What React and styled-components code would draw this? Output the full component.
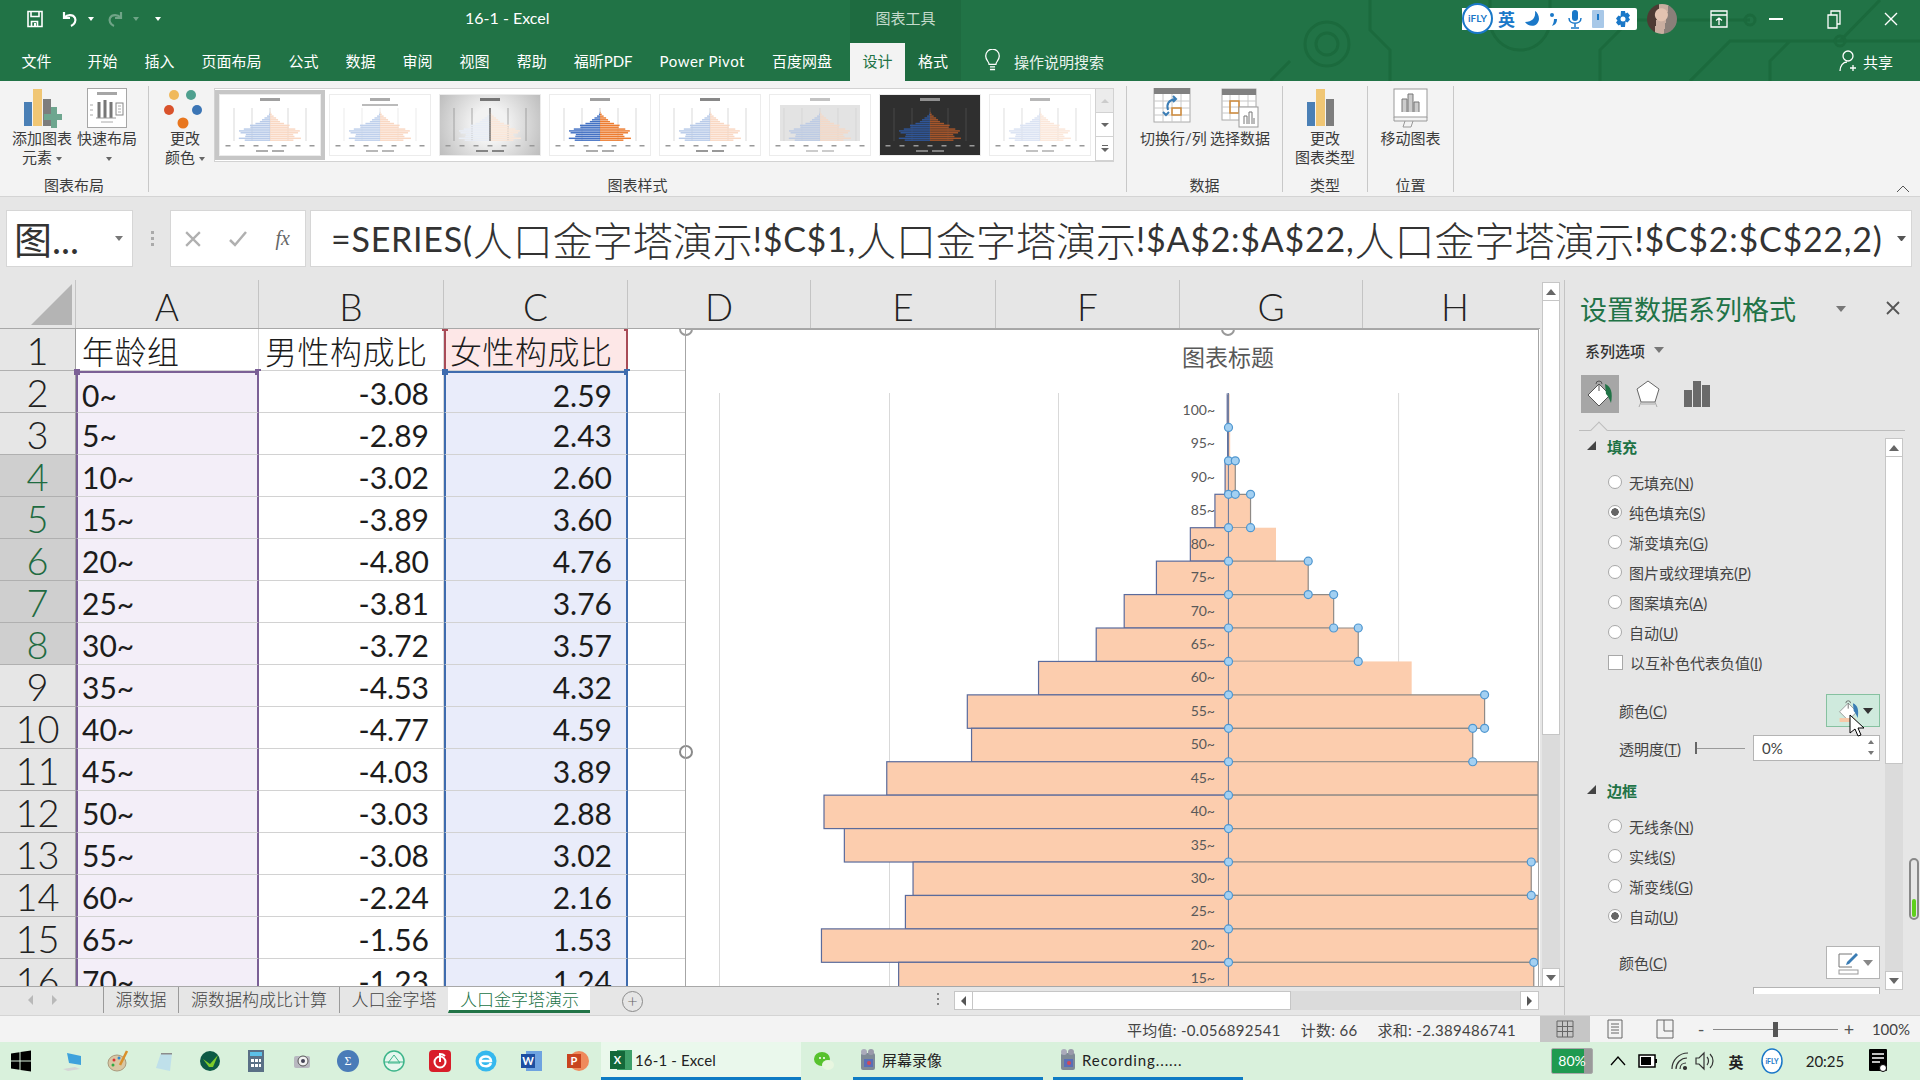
import React from 'react';
import styled, { createGlobalStyle } from 'styled-components';

const FONT = `Lato, "Noto Sans CJK SC", sans-serif`;
const GREEN = '#217346';

const GlobalStyle = createGlobalStyle`
  html, body { margin: 0; padding: 0; background: #e6e6e6; }
  body { font-family: ${FONT}; }
  * { box-sizing: border-box; }
`;

/* ---------- data ---------- */

const sheetRows = [
  ['0~', -3.08, 2.59], ['5~', -2.89, 2.43], ['10~', -3.02, 2.6], ['15~', -3.89, 3.6], ['20~', -4.8, 4.76],
  ['25~', -3.81, 3.76], ['30~', -3.72, 3.57], ['35~', -4.53, 4.32], ['40~', -4.77, 4.59], ['45~', -4.03, 3.89],
  ['50~', -3.03, 2.88], ['55~', -3.08, 3.02], ['60~', -2.24, 2.16], ['65~', -1.56, 1.53], ['70~', -1.23, 1.24],
];

const pyramid = [
  ['100~', 0.015, 0.012, false], ['95~', 0.01, 0.02, false], ['90~', 0.04, 0.08, true], ['85~', 0.16, 0.26, true],
  ['80~', 0.45, 0.56, false], ['75~', 0.85, 0.94, true], ['70~', 1.23, 1.24, true], ['65~', 1.56, 1.53, true],
  ['60~', 2.24, 2.16, false], ['55~', 3.08, 3.02, true], ['50~', 3.03, 2.88, true], ['45~', 4.03, 3.89, true],
  ['40~', 4.77, 4.59, true], ['35~', 4.53, 4.32, true], ['30~', 3.72, 3.57, true], ['25~', 3.81, 3.76, true],
  ['20~', 4.8, 4.76, true], ['15~', 3.89, 3.6, true], ['10~', 3.02, 2.6, true],
];

const columns = [
  ['A', 183], ['B', 185], ['C', 184], ['D', 183], ['E', 185], ['F', 184], ['G', 183], ['H', 185],
];

const tabs = ['开始', '插入', '页面布局', '公式', '数据', '审阅', '视图', '帮助', '福昕PDF', 'Power Pivot', '百度网盘'];

const thumbs = [
  { bg: '#fff', left: '#b9cbe9', right: '#f9d8c3', grid: '#c8c8c8', title: '#777' },
  { bg: '#fff', left: '#bfd0ec', right: '#f9d8c3', grid: '#e2e2e2', title: '#888', low: true },
  { bg: 'radial-gradient(circle, #f2f2f2 30%, #bdbdbd 100%)', left: '#e8edf5', right: '#fae6d8', grid: '#8a8a8a', title: '#444', axis: '#444' },
  { bg: '#fff', left: '#4472c4', right: '#ed7d31', grid: '#c8c8c8', title: '#777' },
  { bg: '#fff', left: '#b9cbe9', right: '#f9d8c3', grid: '#c8c8c8', title: '#555' },
  { bg: '#fff', inner: '#e3e3e3', left: '#bdcbe4', right: '#f3d9c8', grid: '#d0d0d0', title: '#aaa' },
  { bg: '#2f2f2f', left: '#2f5597', right: '#a5552a', grid: '#555', title: '#bbb' },
  { bg: '#fff', left: '#dbe3f3', right: '#fbe7da', grid: '#d0d0d0', title: '#999' },
];

/* ---------- window top ---------- */

const Page = styled.div`
  width: 1920px;
  height: 1080px;
  overflow: hidden;
  display: flex;
  flex-direction: column;
  font-family: ${FONT};
  color: #333;
`;

const TopBar = styled.header`
  position: relative;
  height: 81px;
  flex: none;
  background: ${GREEN};
  color: #fff;
`;

const Circuit = styled.svg`
  position: absolute;
  left: 1270px;
  top: 0;
  pointer-events: none;
`;

const TitleRow = styled.div`
  position: relative;
  display: flex;
  height: 43px;
  font-size: 15px;
`;

const Qat = styled.div`
  width: 465px;
  display: flex;
  align-items: center;
  height: 38px;
  padding-left: 26px;
`;

const QatButton = styled.span`
  display: flex;
  align-items: center;
  margin-right: ${p => p.$gap || 0}px;
  opacity: ${p => (p.$off ? 0.35 : 1)};
`;

const DocTitle = styled.div`
  width: 385px;
  line-height: 36px;
  font-size: 16px;
`;

const ToolBand = styled.div`
  width: 111px;
  background: #1e6b40;
  color: #c4dacc;
  text-align: center;
  line-height: 36px;
`;

const TitleRight = styled.div`
  margin-left: auto;
  display: flex;
  align-items: center;
  height: 38px;
  width: 458px;
`;

const Ifly = styled.div`
  position: relative;
  width: 175px;
  height: 22px;
  margin-top: -1px;
  background: #fff;
  border-radius: 0 2px 2px 0;
  display: flex;
  align-items: center;
  padding-left: 36px;
  gap: 9px;
  color: #1a78c8;
  font-size: 17px;
  font-weight: 700;
`;

const IflyBall = styled.span`
  position: absolute;
  left: 0;
  top: -5px;
  width: 31px;
  height: 31px;
  border-radius: 50%;
  background: #fff;
  border: 2px solid #1a78c8;
  font-size: 10px;
  line-height: 27px;
  text-align: center;
  font-weight: 700;
`;

const Avatar = styled.span`
  width: 30px;
  height: 30px;
  margin-left: 10px;
  margin-right: 13px;
  border-radius: 50%;
  background:
    radial-gradient(circle at 48% 36%, #e3c3b0 0 6px, transparent 7px),
    linear-gradient(100deg, #4d3a33 0 35%, #c9aea0 35% 62%, #8a7f79 62%);
`;

const WinButton = styled.span`
  width: 57.5px;
  display: flex;
  justify-content: center;
`;

const TabRow = styled.nav`
  position: relative;
  display: flex;
  height: 38px;
  font-size: 15px;
`;

const TabGroup = styled.div`
  width: 850px;
  display: flex;
  padding-left: 8px;
`;

const Tab = styled.div`
  padding: 0 13.5px;
  margin-right: ${p => p.$gap || 0}px;
  line-height: 36px;
  white-space: nowrap;
  letter-spacing: ${p => (p.$latin ? 0.55 : 0)}px;
`;

const ContextTab = styled.div`
  width: ${p => p.$w}px;
  text-align: center;
  line-height: 36px;
  background: ${p => (p.$active ? '#f3f3f3' : '#1e6b40')};
  color: ${p => (p.$active ? GREEN : '#fff')};
`;

const Search = styled.div`
  margin-left: 23px;
  display: flex;
  align-items: center;
  gap: 13px;
  height: 36px;
  color: #eaf3ee;
`;

const Share = styled.div`
  margin-left: auto;
  margin-right: 27px;
  display: flex;
  align-items: center;
  gap: 4px;
  height: 36px;
`;

/* ---------- ribbon ---------- */

const Ribbon = styled.section`
  height: 116px;
  flex: none;
  display: flex;
  align-items: flex-start;
  background: #f3f3f3;
  border-bottom: 1px solid #d4d4d4;
  font-size: 15px;
  color: #3c3c3c;
`;

const Group = styled.div`
  width: ${p => p.$w}px;
  height: 106px;
  margin-top: 5px;
  padding-top: 2px;
  border-right: 1px solid #c8c8c8;
`;

const Tools = styled.div`
  height: 85px;
  display: flex;
  justify-content: ${p => (p.$center ? 'center' : 'flex-start')};
  padding-left: ${p => p.$pad || 0}px;
  gap: ${p => p.$gap || 0}px;
`;

const GroupLabel = styled.div`
  text-align: center;
  line-height: 22px;
  margin-top: 1px;
`;

const Tool = styled.div`
  width: ${p => p.$w}px;
  flex: none;
  text-align: center;
  line-height: 19px;
  white-space: nowrap;
`;

const ToolIcon = styled.div`
  height: 41px;
  display: flex;
  justify-content: center;
  align-items: flex-start;
`;

const Caret = styled.span`
  display: inline-block;
  width: 0;
  height: 0;
  margin-left: 4px;
  vertical-align: 2px;
  border: 3px solid transparent;
  border-top: 4px solid ${p => p.$color || '#666'};
  border-bottom: 0;
`;

const Gallery = styled.div`
  width: 900px;
  height: 74px;
  margin-left: 4px;
  background: #fff;
  border: 1px solid #d2d2d2;
  display: flex;
  align-items: center;
`;

const ThumbCell = styled.div`
  width: 110px;
  height: 70px;
  flex: none;
  display: flex;
  align-items: center;
  justify-content: center;
  background: ${p => (p.$selected ? '#c6c6c6' : 'transparent')};
`;

const ThumbBox = styled.div`
  width: 100px;
  height: 60px;
  background: ${p => p.$bg};
  outline: 1px solid #ececec;
`;

const GalleryScroll = styled.div`
  margin-left: auto;
  width: 19px;
  height: 72px;
  display: flex;
  flex-direction: column;
  border-left: 1px solid #d2d2d2;
  color: #666;
`;

const GalleryButton = styled.div`
  flex: 1;
  display: flex;
  flex-direction: column;
  gap: 2px;
  align-items: center;
  justify-content: center;
  background: ${p => (p.$off ? '#ececec' : '#fff')};
  border-bottom: 1px solid #d2d2d2;
`;

const MoreLine = styled.span`
  width: 6px;
  height: 1px;
  background: #666;
`;

const Collapse = styled.div`
  margin-left: auto;
  margin-right: 10px;
  align-self: flex-end;
  margin-bottom: 3px;
  display: flex;
`;

/* ---------- formula bar ---------- */

const FormulaBar = styled.div`
  height: 83px;
  flex: none;
  display: flex;
  padding-top: 13px;
  background: #e6e6e6;
`;

const InputBox = styled.div`
  height: 57px;
  background: #fff;
  border: 1px solid #d6d6d6;
  display: flex;
  align-items: center;
`;

const NameBox = styled(InputBox)`
  width: 127px;
  margin-left: 6px;
  padding-left: 7px;
  font-size: 38px;
  line-height: 1;
  color: #333;
`;

const NameCaret = styled.span`
  margin-left: auto;
  margin-right: 9px;
  width: 0;
  height: 0;
  border: 4px solid transparent;
  border-top: 5px solid #777;
  border-bottom: 0;
`;

const Grip = styled.div`
  width: 37px;
  display: flex;
  flex-direction: column;
  align-items: center;
  justify-content: center;
  gap: 3px;
  height: 57px;
  padding-left: 1px;
  & > i { width: 3px; height: 3px; background: #aaa; }
`;

const FxBox = styled(InputBox)`
  width: 136px;
  justify-content: space-between;
  padding: 0 15px 0 14px;
  color: #a0a0a0;
`;

const FxText = styled.span`
  font-family: "Liberation Serif", serif;
  font-style: italic;
  font-size: 20px;
  color: #666;
`;

const FormulaBox = styled(InputBox)`
  width: 1602px;
  margin-left: 4px;
  padding-left: 20px;
  font-size: 34px;
  letter-spacing: 0.75px;
  color: #333;
  white-space: nowrap;
`;

const Cjk = styled.span`
  font-size: 40px;
  font-weight: 300;
  letter-spacing: 0;
`;

const FormulaCaret = styled.span`
  position: absolute;
  left: 1897px;
  top: 236px;
  width: 9px;
  height: 5px;
  border-left: 4.5px solid transparent;
  border-right: 4.5px solid transparent;
  border-top: 5px solid #555;
`;

/* ---------- sheet ---------- */

const Work = styled.div`
  height: 735px;
  flex: none;
  display: flex;
  background: #e6e6e6;
`;

const SheetColumn = styled.div`
  width: 1564px;
  flex: none;
  display: flex;
  flex-direction: column;
`;

const SheetRow = styled.div`
  height: 706px;
  flex: none;
  display: flex;
`;

const Sheet = styled.div`
  position: relative;
  width: 1540px;
  flex: none;
  overflow: hidden;
  background: #fff;
`;

const HeadRow = styled.div`
  position: relative;
  z-index: 3;
  display: flex;
  height: 49px;
  background: #e6e6e6;
  border-bottom: 1px solid #a8a8a8;
`;

const Corner = styled.div`
  width: 76px;
  flex: none;
  position: relative;
  border-right: 1px solid #c4c4c4;
  &::after {
    content: '';
    position: absolute;
    right: 3px;
    bottom: 3px;
    border-style: solid;
    border-width: 0 0 41px 41px;
    border-color: transparent transparent #b4b4b4 transparent;
  }
`;

const ColHead = styled.div`
  width: ${p => p.$w}px;
  flex: none;
  text-align: center;
  font-size: 37px;
  line-height: 54px;
  color: #222;
  font-weight: 300;
  border-right: 1px solid #c4c4c4;
`;

const Row = styled.div`
  display: flex;
  height: 42px;
`;

const RowHead = styled.div`
  position: relative;
  width: 76px;
  flex: none;
  text-align: center;
  font-size: 38px;
  font-weight: 300;
  line-height: 42px;
  background: ${p => (p.$on ? '#cfcfcf' : '#e6e6e6')};
  color: ${p => (p.$on ? '#1f6b41' : '#222')};
  border-bottom: 1px solid #b0b0b0;
  border-right: 1px solid #a0a0a0;
`;

const rangeBg = { purple: '#f3eef8', blue: '#e9ecfa', red: '#fde7e7' };
const rangeLine = { purple: '#7b6096', blue: '#3f6cae', red: '#a84b57' };

const Cell = styled.div`
  position: relative;
  width: ${p => p.$w}px;
  flex: none;
  padding: 4px ${p => (p.$num ? 14 : 0)}px 0 ${p => (p.$range ? 4 : 6)}px;
  text-align: ${p => (p.$num ? 'right' : 'left')};
  font-size: ${p => (p.$cjk ? 32 : 30)}px;
  letter-spacing: ${p => (p.$cjk ? 0.5 : 0)}px;
  font-weight: ${p => (p.$cjk ? 300 : 400)};
  line-height: 37px;
  color: #1c1c1c;
  white-space: nowrap;
  background: ${p => (p.$range ? rangeBg[p.$range] : '#fff')};
  border-bottom: 1px solid #d2d2d2;
  border-right: ${p => (p.$range ? `2px solid ${rangeLine[p.$range]}` : '1px solid #d8d8d8')};
  border-left: ${p => (p.$range ? `2px solid ${rangeLine[p.$range]}` : '0')};
  border-top: ${p => (p.$top ? `2px solid ${rangeLine[p.$range]}` : '0')};
`;

const Knob = styled.span`
  position: absolute;
  top: -4px;
  ${p => p.$side}: -4px;
  width: 6px;
  height: 6px;
  background: ${p => rangeLine[p.$range]};
`;

const Chart = styled.svg`
  position: absolute;
  z-index: 2;
  left: 686px;
  top: 49px;
  overflow: visible;
  background: #fff;
  font-family: ${FONT};
`;

const ChartEdge = styled.div`
  position: absolute;
  z-index: 2;
  left: 685px;
  top: 49px;
  width: 854px;
  height: 658px;
  border: 1px solid #a6a6a6;
  pointer-events: none;
`;

const VScroll = styled.div`
  width: 18px;
  margin: 2px 0 0 2px;
  height: 705px;
  display: flex;
  flex-direction: column;
  background: #dbdbdb;
`;

const ScrollArrow = styled.div`
  height: 19px;
  flex: none;
  display: flex;
  align-items: center;
  justify-content: center;
  background: #fff;
  border: 1px solid #c6c6c6;
`;

const ScrollThumb = styled.div`
  height: ${p => p.$h}px;
  flex: none;
  background: #fff;
  border: 1px solid #c6c6c6;
  border-top: 0;
`;

const Spacer = styled.div`
  flex: 1;
`;

const Tri = styled.span`
  width: 0;
  height: 0;
  border-left: ${p => (p.$small ? 4 : 5)}px solid transparent;
  border-right: ${p => (p.$small ? 4 : 5)}px solid transparent;
  border-${p => (p.$up ? 'bottom' : 'top')}: ${p => (p.$small ? 4 : 6)}px solid ${p => p.$color || '#666'};
`;

const SideTri = styled.span`
  width: 0;
  height: 0;
  border-top: 5px solid transparent;
  border-bottom: 5px solid transparent;
  border-${p => (p.$left ? 'right' : 'left')}: 5px solid #555;
`;

const TabStrip = styled.div`
  height: 29px;
  flex: none;
  display: flex;
  align-items: flex-start;
  background: #e6e6e6;
  font-size: 17px;
  color: #444;
  font-weight: 300;
  border-top: 1px solid #a8a8a8;
`;

const StripNav = styled.div`
  width: 103px;
  height: 26px;
  flex: none;
  display: flex;
  align-items: center;
  gap: 19px;
  padding-left: 28px;
  opacity: 0.3;
`;

const SheetTab = styled.div`
  height: 26px;
  flex: none;
  width: ${p => p.$w}px;
  text-align: center;
  line-height: 25px;
  border-left: 1px solid ${p => (p.$active ? 'transparent' : '#9a9a9a')};
  background: ${p => (p.$active ? '#fff' : 'transparent')};
  color: ${p => (p.$active ? GREEN : '#444')};
  border-bottom: ${p => (p.$active ? `3px solid ${GREEN}` : '0')};
  margin-left: ${p => p.$gap || 0}px;
  white-space: nowrap;
`;

const AddSheet = styled.span`
  width: 21px;
  height: 21px;
  flex: none;
  margin: 4px 0 0 32px;
  border: 1.5px solid #8a8a8a;
  border-radius: 50%;
  color: #666;
  font-size: 18px;
  line-height: 17px;
  text-align: center;
`;

const HScrollWrap = styled.div`
  margin-left: auto;
  width: 585px;
  height: 19px;
  margin-top: 4px;
  margin-right: 25px;
  display: flex;
  position: relative;
  background: #dbdbdb;
`;

const HGrip = styled.span`
  position: absolute;
  left: -17px;
  top: 2px;
  display: flex;
  flex-direction: column;
  gap: 3px;
  & > i { width: 2px; height: 2px; background: #888; }
`;

const HArrow = styled.div`
  width: 19px;
  flex: none;
  display: flex;
  align-items: center;
  justify-content: center;
  background: #fff;
  border: 1px solid #c6c6c6;
`;

const HThumb = styled.div`
  width: 318px;
  background: #fff;
  border: 1px solid #c6c6c6;
  border-left: 0;
`;

/* ---------- format pane ---------- */

const Pane = styled.aside`
  position: relative;
  flex: 1;
  border-left: 1px solid #c4c4c4;
  padding-left: 15px;
  background: #e6e6e6;
  overflow: hidden;
  color: #444;
  font-size: 15px;
`;

const PaneHead = styled.div`
  display: flex;
  align-items: center;
  height: 32px;
  margin-top: 13px;
`;

const PaneTitle = styled.h2`
  margin: 0;
  font-size: 27px;
  font-weight: 400;
  line-height: 32px;
  color: ${GREEN};
  width: 256px;
  position: relative;
  top: 1px;
`;

const PaneClose = styled.span`
  margin-left: 40px;
  margin-top: -3px;
  display: flex;
`;

const OptionRow = styled.div`
  display: flex;
  align-items: center;
  gap: 9px;
  height: 22px;
  margin-top: 14px;
  padding-left: 5px;
  font-weight: 500;
  color: #333;
`;

const IconRow = styled.div`
  display: flex;
  align-items: center;
  height: 38px;
  margin-top: 14px;
  padding-left: 1px;
`;

const PaneIcon = styled.span`
  width: 38px;
  height: 38px;
  margin-right: ${p => p.$gap || 0}px;
  display: flex;
  align-items: center;
  justify-content: center;
  background: ${p => (p.$on ? '#a6a6a6' : 'transparent')};
`;

const Divider = styled.div`
  position: relative;
  width: 326px;
  height: 1px;
  margin: 17px 0 0 -1px;
  background: #bdbdbd;
  &::after {
    content: '';
    position: absolute;
    left: 14px;
    top: -6px;
    width: 11px;
    height: 11px;
    transform: rotate(45deg);
    background: #e6e6e6;
    border-left: 1px solid #bdbdbd;
    border-top: 1px solid #bdbdbd;
  }
`;

const PaneBody = styled.div`
  display: flex;
  height: 563px;
`;

const PaneContent = styled.div`
  width: 300px;
  flex: none;
  height: 563px;
  overflow: hidden;
  padding-top: 5px;
`;

const SectionHead = styled.div`
  position: relative;
  display: flex;
  align-items: center;
  height: 20px;
  margin-top: ${p => p.$gap || 0}px;
  padding-left: 27px;
  font-weight: 700;
  color: ${GREEN};
  &::before {
    content: '';
    position: absolute;
    left: 7px;
    top: 5px;
    border-style: solid;
    border-width: 0 0 9px 9px;
    border-color: transparent transparent #444 transparent;
  }
`;

const OptionList = styled.div`
  margin-top: 11px;
  padding-left: 28px;
`;

const Option = styled.div`
  height: 30px;
  display: flex;
  align-items: center;
  gap: 7px;
  white-space: nowrap;
`;

const Radio = styled.span`
  width: 14px;
  height: 14px;
  flex: none;
  border-radius: 50%;
  border: 1px solid #a8a8a8;
  background: ${p => (p.$on ? 'radial-gradient(circle, #666 0 3.5px, #fff 4px)' : '#fff')};
`;

const Check = styled.span`
  width: 15px;
  height: 15px;
  flex: none;
  border: 1px solid #a8a8a8;
  background: #fff;
`;

const Field = styled.div`
  display: flex;
  align-items: center;
  justify-content: space-between;
  margin-top: ${p => p.$gap || 0}px;
  padding-left: 39px;
`;

const ColorButton = styled.span`
  width: 54px;
  height: 33px;
  display: flex;
  align-items: center;
  justify-content: center;
  gap: 3px;
  padding-left: 4px;
  background: ${p => (p.$hot ? '#cfeadd' : '#fff')};
  border: 1px solid ${p => (p.$hot ? '#86c1a0' : '#b4b4b4')};
`;

const Slider = styled.span`
  position: relative;
  width: 50px;
  height: 1px;
  margin: 0 8px 0 auto;
  background: #9a9a9a;
  &::before {
    content: '';
    position: absolute;
    left: 0;
    top: -6px;
    width: 2px;
    height: 12px;
    background: #666;
  }
`;

const NumberBox = styled.span`
  position: relative;
  width: 127px;
  height: ${p => p.$h || 26}px;
  padding-left: 8px;
  display: block;
  line-height: 25px;
  background: #fff;
  border: 1px solid #b4b4b4;
`;

const Spin = styled.span`
  position: absolute;
  right: 5px;
  top: 4px;
  display: flex;
  flex-direction: column;
  gap: 7px;
`;

const TinyTri = styled.span`
  width: 0;
  height: 0;
  border-left: 3px solid transparent;
  border-right: 3px solid transparent;
  border-${p => (p.$up ? 'bottom' : 'top')}: 4px solid #777;
`;

const PaneScroll = styled.div`
  width: 18px;
  margin: 7px 0 0 5px;
  height: 552px;
  display: flex;
  flex-direction: column;
  background: #dbdbdb;
`;

const GreenGauge = styled.div`
  position: absolute;
  left: 344px;
  top: 578px;
  width: 10px;
  height: 62px;
  border: 2px solid #888;
  border-radius: 5px;
  background: #e6e6e6;
  &::after {
    content: '';
    position: absolute;
    left: 1px;
    right: 1px;
    bottom: 1px;
    height: 18px;
    border-radius: 3px;
    background: #5fd01c;
  }
`;

const Cursor = styled.svg`
  position: absolute;
  left: 284px;
  top: 434px;
`;

/* ---------- status and task bars ---------- */

const StatusBar = styled.footer`
  height: 27px;
  flex: none;
  display: flex;
  align-items: center;
  background: #f3f3f3;
  border-top: 1px solid #d4d4d4;
  font-size: 15px;
  color: #444;
`;

const Stats = styled.div`
  width: 1540px;
  flex: none;
  display: flex;
  justify-content: flex-end;
  gap: 20px;
  padding-right: 24px;
  letter-spacing: 0.3px;
`;

const ViewButton = styled.span`
  width: 50px;
  height: 26px;
  flex: none;
  display: flex;
  align-items: center;
  justify-content: center;
  background: ${p => (p.$on ? '#c6c6c6' : 'transparent')};
`;

const Zoom = styled.div`
  display: flex;
  align-items: center;
  padding-left: 5px;
  flex: 1;
`;

const ZoomSign = styled.span`
  width: 12px;
  text-align: center;
  font-size: 18px;
  line-height: 18px;
  color: #555;
`;

const ZoomTrack = styled.span`
  position: relative;
  width: 125px;
  height: 1px;
  margin: 0 5px 0 6px;
  background: #888;
  &::after {
    content: '';
    position: absolute;
    left: 60px;
    top: -7px;
    width: 5px;
    height: 15px;
    background: #555;
  }
`;

const ZoomValue = styled.span`
  margin-left: auto;
  padding-right: 10px;
`;

const TaskBar = styled.div`
  height: 38px;
  flex: none;
  display: flex;
  align-items: center;
  background: #d9f1dc;
  font-size: 15px;
  color: #222;
`;

const StartSlot = styled.span`
  width: 49px;
  flex: none;
  padding-right: 7px;
  display: flex;
  justify-content: center;
`;

const AppSlot = styled.span`
  width: ${p => p.$w || 46}px;
  flex: none;
  display: flex;
  justify-content: center;
`;

const TaskItem = styled.div`
  width: ${p => p.$w}px;
  height: 38px;
  flex: none;
  margin-left: ${p => p.$gap || 0}px;
  display: flex;
  align-items: center;
  gap: ${p => p.$inner || 3}px;
  padding-left: ${p => p.$pad || 8}px;
  background: ${p => (p.$active ? '#eaf8ec' : 'transparent')};
  border-bottom: 3px solid #0f7bc4;
  letter-spacing: ${p => p.$track || 0}px;
`;

const Battery = styled.span`
  width: 42px;
  height: 26px;
  margin-left: 308px;
  flex: none;
  background: linear-gradient(90deg, #1f9a50 0 80%, #9a9a9a 80%);
  border: 1px solid #aaa;
  border-radius: 2px;
  color: #fff;
  font-size: 14px;
  line-height: 24px;
  text-align: center;
`;

const TraySlot = styled.span`
  width: ${p => p.$w || 24}px;
  margin-left: ${p => p.$gap || 0}px;
  flex: none;
  display: flex;
  justify-content: center;
  white-space: nowrap;
  font-weight: ${p => (p.$bold ? 700 : 400)};
`;

/* ---------- drawings ---------- */

const SaveIcon = () => (
  <svg width="18" height="18" viewBox="0 0 18 18" fill="none" stroke="#fff" strokeWidth="1.6">
    <path d="M2 1.5h14v15H2z" />
    <path d="M5 1.5v5h8v-5M5.5 16.5v-5h6v5" />
    <path d="M8 13h2v3.5H8z" fill="#fff" stroke="none" />
  </svg>
);

const UndoIcon = ({ flip }) => (
  <svg width="20" height="20" viewBox="0 0 20 20" fill="none" stroke="#fff" strokeWidth="2.2" style={flip ? { transform: 'scaleX(-1)' } : null}>
    <path d="M4 3v6h6" />
    <path d="M4.5 8.5C7 5.5 13 5 15 9c1.400 3-0.500 6.500-4 8" />
  </svg>
);

const ChartBars = ({ plus }) => (
  <svg width="40" height="42" viewBox="0 0 40 42">
    <rect x="2" y="14" width="8" height="24" fill="#4a7fb5" />
    <rect x="11" y="1" width="9" height="37" fill="#f0c674" />
    <rect x="21" y="11" width="8" height="27" fill="#7d7d7d" />
    {plus && <path d="M22 26h7v-7h6v7h5v6h-5v8h-6v-8h-7z" fill="#6ea68f" />}
  </svg>
);

const QuickLayout = () => (
  <svg width="40" height="40" viewBox="0 0 40 40" fill="none">
    <rect x="0.500" y="0.500" width="39" height="39" fill="#fff" stroke="#a6a6a6" />
    <rect x="10" y="4" width="20" height="3" fill="#a6a6a6" />
    <path d="M12 14v16M18 12v18M24 14v16" stroke="#777" strokeWidth="3" />
    <path d="M9 30h20" stroke="#999" />
    <rect x="29" y="15" width="7" height="12" stroke="#888" />
    <path d="M31 18h3M31 21h3M31 24h3M3 17h3M3 22h3M3 27h3M14 34h12" stroke="#aaa" />
  </svg>
);

const ColorDots = () => (
  <svg width="42" height="42" viewBox="0 0 42 42">
    <circle cx="10" cy="7" r="5" fill="#f0b95c" />
    <circle cx="27" cy="7" r="5" fill="#4fa08f" />
    <circle cx="5" cy="22" r="5" fill="#d9522b" />
    <circle cx="33" cy="22" r="5" fill="#3b75b5" />
    <circle cx="19" cy="35" r="5.500" fill="#e8761e" />
  </svg>
);

const SwitchIcon = () => (
  <svg width="38" height="36" viewBox="0 0 38 36" fill="none">
    <rect x="1" y="0" width="36" height="34" fill="#fff" stroke="#aaa" />
    <rect x="1" y="0" width="36" height="6" fill="#808080" />
    <path d="M1 13h36M1 20h36M1 27h36M10 6v28M19 6v28M28 6v28" stroke="#c8c8c8" />
    <path d="M19 20h9v7h-9z" stroke="#d08a3a" strokeWidth="1.500" />
    <path d="M15 22c-2-6 1-10 7-11M20 8l3 3-3 3M19 11" stroke="#3b7db5" strokeWidth="2" />
    <path d="M10 24l3 3 3-3" stroke="#3b7db5" strokeWidth="2" />
  </svg>
);

const SelectData = () => (
  <svg width="38" height="40" viewBox="0 0 38 40" fill="none">
    <rect x="1" y="1" width="34" height="31" fill="#fff" stroke="#aaa" />
    <rect x="1" y="1" width="34" height="6" fill="#808080" />
    <path d="M1 13h34M1 19h34M1 25h34M9 7v25M18 7v25M27 7v25" stroke="#c8c8c8" />
    <path d="M9 13h9v12H9z" stroke="#d08a3a" strokeWidth="1.500" />
    <rect x="18" y="19" width="19" height="20" fill="#fff" stroke="#999" />
    <path d="M23 36V28h3v8M28 36V24h3v12M33 36v-6" stroke="#777" />
  </svg>
);

const MoveChart = () => (
  <svg width="36" height="40" viewBox="0 0 36 40" fill="none">
    <rect x="1" y="1" width="33" height="28" fill="#fff" stroke="#999" />
    <path d="M9 24V11h5v13M15 24V6h5v18M21 24V14h5v10" fill="#ccc" stroke="#777" />
    <path d="M1 29v4h33v-4M12 33l-2 6h8l2-6" stroke="#999" />
  </svg>
);

const Bulb = () => (
  <svg width="17" height="24" viewBox="0 0 20 28" fill="none" stroke="#fff" strokeWidth="1.500">
    <path d="M6 18c0-3-4-5-4-10a8 8 0 0 1 16 0c0 5-4 7-4 10z" />
    <path d="M7 21h6M7 24h6" />
  </svg>
);

const Person = () => (
  <svg width="20" height="22" viewBox="0 0 20 22" fill="none" stroke="#fff" strokeWidth="1.300">
    <circle cx="9" cy="6" r="5" />
    <path d="M1 21c0-5 3-9 7-9M14 15v6M11 18h6" />
  </svg>
);

const Cross = ({ size = 14, color = '#555', width = 1.500 }) => (
  <svg width={size} height={size} viewBox="0 0 14 14" stroke={color} strokeWidth={width}>
    <path d="M1 1l12 12M13 1L1 13" />
  </svg>
);

const FillBucket = ({ small }) => (
  <svg width={small ? 22 : 28} height={small ? 22 : 28} viewBox="0 0 28 28" fill="none">
    <path d="M13 4L2 15l11 11 11-11z" fill="#fff" stroke={small ? '#888' : '#555'} />
    <path d="M13 4v7" stroke="#555" />
    <path d="M10 4a3 3 0 0 1 6 0" stroke="#555" />
    <path d="M19 4c6 2 8 9 6 19-2-5-3-7-5-9z" fill={small ? '#3b7db5' : GREEN} />
    {small && <rect x="2" y="23" width="20" height="5" fill="#f8c9a8" />}
  </svg>
);

const Pentagon = () => (
  <svg width="26" height="30" viewBox="0 0 26 30" fill="none">
    <path d="M13 2l11 8-4 13H6L2 10z" fill="#fff" stroke="#666" />
    <path d="M6 23l-2 5M20 23l2 5M6 25h14" stroke="#aaa" />
  </svg>
);

const BarsIcon = () => (
  <svg width="28" height="28" viewBox="0 0 28 28" fill="#6a6a6a">
    <rect x="1" y="10" width="8" height="17" />
    <rect x="10" y="1" width="8" height="26" />
    <rect x="19" y="5" width="8" height="22" />
  </svg>
);

const PenIcon = () => (
  <svg width="22" height="24" viewBox="0 0 22 24" fill="none">
    <path d="M14 3H1v13h13" stroke="#777" />
    <path d="M8 14l1-3L18 2l2 2-9 9z" fill="#3b7db5" />
    <rect x="1" y="19" width="19" height="4" stroke="#999" fill="#fff" />
  </svg>
);

const GridIcon = () => (
  <svg width="18" height="18" viewBox="0 0 18 18" fill="none" stroke="#666">
    <path d="M1 1h16v16H1zM1 6.500h16M1 11.500h16M6.500 1v16M11.500 1v16" />
  </svg>
);

const PageIcon = () => (
  <svg width="16" height="20" viewBox="0 0 16 20" fill="none" stroke="#666">
    <path d="M1 1h14v18H1zM4 5h8M4 8h8M4 11h8M4 14h8" />
  </svg>
);

const BreakIcon = () => (
  <svg width="18" height="20" viewBox="0 0 18 20" fill="none" stroke="#666">
    <path d="M1 1h16v18H1zM8 1v11h9" />
  </svg>
);

const WinIcon = () => (
  <svg width="22" height="22" viewBox="0 0 22 22" fill="#000">
    <path d="M1 3.500l8.500-1.200v8.200H1zM10.500 2.100L21 .5v10h-10.500zM1 11.500h8.500v8.200L1 18.500zM10.500 11.500H21v10l-10.500-1.500z" />
  </svg>
);

const AppIcon = ({ kind }) => {
  const icons = {
    computer: (<g><path d="M7 4l14 3v9L9 14z" fill="#3fa2dc" /><path d="M3 20l12-2 5 2-12 2z" fill="#d5d5d5" /></g>),
    paint: (<g><ellipse cx="11" cy="14" rx="9" ry="8" fill="#d9c7a3" stroke="#a99a7d" /><circle cx="8" cy="11" r="1.500" fill="#d33" /><circle cx="13" cy="9" r="1.500" fill="#38c" /><circle cx="7" cy="16" r="1.500" fill="#3a4" /><path d="M14 16L21 2" stroke="#d9902b" strokeWidth="2.500" /></g>),
    note: (<g><path d="M4 19L9 4h11l-2 18z" fill="#bfe0ea" /><path d="M9 4h11v1.500H9z" fill="#8c8c8c" /></g>),
    lucky: (<g><circle cx="12" cy="12" r="10" fill="#0d5a45" /><path d="M5 10l7 5 8-9-5 12h-4z" fill="#7ecb2a" /></g>),
    calc: (<g><rect x="4" y="1" width="16" height="22" fill="#5a7086" /><rect x="6" y="3" width="12" height="4" fill="#5cc0e8" /><path d="M7 10h3v3H7zM11 10h3v3h-3zM15 10h2v3h-2zM7 15h3v3H7zM11 15h3v3h-3zM15 15h2v3h-2z" fill="#fff" /></g>),
    cam: (<g><rect x="4" y="7" width="16" height="12" rx="2" fill="#b8b8c0" /><circle cx="13" cy="12" r="5" fill="#f2f2f2" stroke="#555" /><circle cx="13" cy="12" r="2" fill="#445" /></g>),
    sigma: (<g><circle cx="12" cy="12" r="11" fill="#4a7cb8" /><text x="12" y="16" fontSize="12" fill="#fff" textAnchor="middle" fontFamily="Liberation Serif">Σ</text></g>),
    ring: (<g><circle cx="12" cy="12" r="10" fill="#e6f7ee" stroke="#3db58a" strokeWidth="1.500" /><path d="M6 14l6-8 6 8z" fill="none" stroke="#3db58a" /><path d="M2 13h20" stroke="#3db58a" /></g>),
    music: (<g><rect x="1" y="1" width="22" height="22" rx="4" fill="#d81e2a" /><circle cx="12" cy="13" r="5.500" fill="none" stroke="#fff" strokeWidth="2" /><path d="M12 13V5c3 0 4 1 5 2" fill="none" stroke="#fff" strokeWidth="2" /></g>),
    edge: (<g><circle cx="12" cy="12" r="10.500" fill="#35b8ee" /><path d="M6 12h11c0-6-10-6-11 0 0 6 9 7 11 2" fill="none" stroke="#fff" strokeWidth="2.500" /></g>),
    word: (<g><rect x="6" y="2" width="16" height="20" fill="#6ea3e0" /><rect x="1" y="5" width="14" height="14" fill="#1d4fa1" /><text x="8" y="16" fontSize="11" fontWeight="700" fill="#fff" textAnchor="middle">W</text></g>),
    ppt: (<g><circle cx="13" cy="12" r="10" fill="#ef8a5c" /><rect x="1" y="5" width="14" height="14" fill="#c8441f" /><text x="8" y="16" fontSize="11" fontWeight="700" fill="#fff" textAnchor="middle">P</text></g>),
    excel: (<g><rect x="8" y="2" width="15" height="20" fill="#3fa06a" /><rect x="1" y="3" width="15" height="18" fill="#14683a" /><text x="8.500" y="16" fontSize="11" fontWeight="700" fill="#fff" textAnchor="middle">X</text></g>),
    chat: (<g><ellipse cx="10" cy="10" rx="8" ry="7" fill="#57c22e" /><ellipse cx="16" cy="16" rx="6" ry="5" fill="#e8f6e0" /><circle cx="8" cy="9" r="1" fill="#fff" /><circle cx="12" cy="9" r="1" fill="#fff" /></g>),
    rec: (<g><rect x="6" y="5" width="14" height="17" rx="2" fill="#7f8a96" /><rect x="9" y="11" width="9" height="8" fill="#5a6fb8" /><circle cx="14" cy="15" r="2" fill="#d04a5a" /><circle cx="9" cy="4" r="3" fill="#aab" /><circle cx="16" cy="4" r="3" fill="#99a" /></g>),
  };
  return <svg width="24" height="24" viewBox="0 0 24 24">{icons[kind]}</svg>;
};

const PowerIcon = () => (
  <svg width="20" height="14" viewBox="0 0 20 14">
    <rect x="1" y="1" width="16" height="12" fill="#fff" stroke="#000" strokeWidth="1.500" />
    <rect x="3" y="3" width="10" height="8" fill="#000" />
    <rect x="17" y="5" width="2" height="4" fill="#000" />
  </svg>
);

const WifiIcon = () => (
  <svg width="20" height="20" viewBox="0 0 20 20" fill="none" stroke="#333" strokeWidth="1.200">
    <path d="M2 18C2 9 9 2 18 2M6 18c0-6 5-11 11-11M10 18c0-4 3-6 6-6" />
    <circle cx="15" cy="17" r="1.500" fill="#333" />
  </svg>
);

const VolumeIcon = () => (
  <svg width="22" height="20" viewBox="0 0 22 20" fill="none" stroke="#333" strokeWidth="1.200">
    <path d="M2 7h3l5-5v16l-5-5H2zM13 6c2 2 2 6 0 8M16 3c4 4 4 10 0 14" />
  </svg>
);

const NoteIcon = () => (
  <svg width="20" height="26" viewBox="0 0 20 26">
    <rect x="1" y="1" width="18" height="22" rx="1" fill="#000" />
    <path d="M4 6h12M4 10h12M4 14h8" stroke="#fff" strokeWidth="1.500" />
    <circle cx="15" cy="20" r="3.500" fill="#fff" stroke="#000" />
  </svg>
);

const MiniPyramid = ({ t }) => {
  const rowH = 1.85;
  return (
    <svg width="100" height="60" viewBox="0 0 100 60">
      {t.inner && <rect x="10" y="10" width="80" height="36" fill={t.inner} />}
      <rect x="40" y="3" width="20" height="3" fill={t.title} opacity="0.7" />
      {t.low && <rect x="32" y="9" width="36" height="2" fill="#bbb" />}
      {[14, 32, 50, 68, 86].map(x => (
        <line key={x} x1={x} x2={x} y1="13" y2="46" stroke={t.grid} strokeWidth="0.700" />
      ))}
      {pyramid.slice(0, 18).map(([label, m, f], i) => (
        <g key={label}>
          <rect x={50 - m * 6.5} y={13 + i * rowH} width={m * 6.5} height={rowH - 0.4} fill={t.left} />
          <rect x={50} y={13 + i * rowH} width={f * 6.5} height={rowH - 0.4} fill={t.right} />
        </g>
      ))}
      {t.axis && <line x1="50" x2="50" y1="13" y2="46" stroke={t.axis} />}
      {[8, 22, 36, 50, 64, 78, 92].map(x => (
        <rect key={x} x={x - 2.5} y="50" width="5" height="1.500" fill="#999" />
      ))}
      <rect x="36" y="55" width="12" height="2" fill={t.title} opacity="0.6" />
      <rect x="52" y="55" width="12" height="2" fill={t.title} opacity="0.6" />
    </svg>
  );
};

const PyramidChart = () => {
  const cx = 1228.5;
  const unit = 84.8;
  const top = 394;
  const rowH = 33.43;
  const maxX = 1538;
  return (
    <Chart width="853" height="657" viewBox="686 329 853 657">
      <text x="1228" y="366" textAnchor="middle" fontSize="23" fill="#595959">图表标题</text>
      {[719.5, 889.5, 1058.5, 1398.6].map(x => (
        <line key={x} x1={x} x2={x} y1="393" y2="986" stroke="#d9d9d9" />
      ))}
      {pyramid.map(([label, m, f, outlined], i) => {
        const y = top + i * rowH;
        const right = Math.min(cx + f * unit, maxX);
        return (
          <g key={label}>
            <rect x={cx - m * unit} y={y} width={m * unit} height={rowH} fill="#fccdae" stroke="#5b6b9c" strokeWidth="1.200" />
            <rect x={cx} y={y} width={right - cx} height={rowH} fill="#fccdae" />
            {outlined && <path d={`M${cx} ${y}H${right}V${y + rowH}H${cx}`} fill="none" stroke="#8f8a86" strokeWidth="1.200" />}
          </g>
        );
      })}
      <line x1={cx} x2={cx} y1="393" y2="986" stroke="#6f7f9f" />
      {pyramid.map(([label], i) => (
        <text key={label} x="1215" y={top + i * rowH + 21} textAnchor="end" fontSize="14" fill="#595959">{label}</text>
      ))}
      {pyramid.map(([label, , f, outlined], i) => {
        const y = top + (i + 1) * rowH;
        const right = cx + f * unit;
        const dots = [];
        if (i < 17) dots.push([cx, y]);
        if (outlined && right < maxX) dots.push([right, y - rowH], [right, y]);
        return dots.map(([hx, hy]) => (
          <circle key={`${label}${hx}${hy}`} cx={hx} cy={hy} r="4" fill="#a3d0f2" stroke="#4f96cf" strokeWidth="1.200" />
        ));
      })}
      <circle cx="686" cy="329" r="6" fill="#fff" stroke="#999" strokeWidth="2" />
      <circle cx="1228" cy="329" r="6" fill="#fff" stroke="#999" strokeWidth="2" />
      <circle cx="686" cy="752" r="6" fill="#fff" stroke="#8a8a8a" strokeWidth="2" />
    </Chart>
  );
};

const Label = ({ text, keyChar }) => (
  <span>{text}(<u>{keyChar}</u>)</span>
);

const fillOptions = [['无填充', 'N'], ['纯色填充', 'S', true], ['渐变填充', 'G'], ['图片或纹理填充', 'P'], ['图案填充', 'A'], ['自动', 'U']];
const lineOptions = [['无线条', 'N'], ['实线', 'S'], ['渐变线', 'G'], ['自动', 'U', true]];

export default function App() {
  const headerCells = ['年龄组', '男性构成比', '女性构成比'];
  return (
    <Page>
      <GlobalStyle />
      <TopBar>
        <Circuit width="650" height="81" viewBox="0 0 650 81" fill="none" stroke="#1b6a3d" strokeWidth="3">
          <circle cx="57" cy="44" r="22" />
          <circle cx="57" cy="44" r="11" />
          <path d="M0 81l20-20M100 0v30l20 20v31M220 0v20a30 30 0 0 0 60 0V0M330 81V50l30-30h120M420 81l40-40h110l40-41M500 81v-20l20-20h130" />
          <circle cx="480" cy="20" r="5" />
          <circle cx="570" cy="41" r="5" />
        </Circuit>
        <TitleRow>
          <Qat>
            <QatButton $gap={16}><SaveIcon /></QatButton>
            <QatButton $gap={4}><UndoIcon /></QatButton>
            <QatButton $gap={11}><Caret $color="#fff" /></QatButton>
            <QatButton $gap={4} $off><UndoIcon flip /></QatButton>
            <QatButton $gap={12} $off><Caret $color="#fff" /></QatButton>
            <QatButton><Caret $color="#fff" /></QatButton>
          </Qat>
          <DocTitle>16-1 - Excel</DocTitle>
          <ToolBand>图表工具</ToolBand>
          <TitleRight>
            <Ifly>
              <IflyBall>iFLY</IflyBall>
              <span>英</span>
              <svg width="16" height="18" viewBox="0 0 16 18" fill="#1a78c8"><path d="M11 1c1 7-3 11-10 11 3 5 13 6 14-3 0-4-2-7-4-8z" /></svg>
              <svg width="10" height="18" viewBox="0 0 10 18" fill="#1a78c8"><circle cx="3" cy="5" r="2" /><path d="M5 9h3c0 4-2 6-5 7 1-2 2-4 2-7z" /></svg>
              <svg width="14" height="20" viewBox="0 0 14 20" fill="#1a78c8"><rect x="4" y="1" width="6" height="11" rx="3" /><path d="M1 9c0 7 12 7 12 0M7 14v4M3 19h8" fill="none" stroke="#1a78c8" strokeWidth="1.500" /></svg>
              <svg width="14" height="20" viewBox="0 0 14 20"><rect x="1" y="1" width="12" height="18" rx="1" fill="#a8c8e8" /><rect x="6" y="5" width="2" height="6" fill="#1a78c8" /></svg>
              <svg width="18" height="18" viewBox="0 0 18 18" fill="#1a78c8"><path d="M7 1h4l.500 2.500 2-1 2.500 3-1.500 2 1.500 2-2.500 3-2-1L11 17H7l-.500-2.500-2 1-2.500-3 1.500-2-1.500-2 2.500-3 2 1z" /><circle cx="9" cy="9" r="2.500" fill="#fff" /></svg>
            </Ifly>
            <Avatar />
            <WinButton>
              <svg width="18" height="18" viewBox="0 0 18 18" fill="none" stroke="#fff" strokeWidth="1.300"><path d="M1 1h16v16H1zM1 5h16M9 15V8M6 10.500L9 8l3 2.500" /></svg>
            </WinButton>
            <WinButton><svg width="14" height="2"><rect width="14" height="2" fill="#fff" /></svg></WinButton>
            <WinButton>
              <svg width="14" height="20" viewBox="0 0 14 20" fill="none" stroke="#fff" strokeWidth="1.300"><path d="M1 6h9v13H1zM4 6V2h9v13h-3" /></svg>
            </WinButton>
            <WinButton><Cross size={14} color="#fff" width={1.400} /></WinButton>
          </TitleRight>
        </TitleRow>
        <TabRow>
          <TabGroup>
            <Tab $gap={9}>文件</Tab>
            {tabs.map(t => <Tab key={t} $latin={t === 'Power Pivot'}>{t}</Tab>)}
          </TabGroup>
          <ContextTab $w={55} $active>设计</ContextTab>
          <ContextTab $w={56}>格式</ContextTab>
          <Search><Bulb />操作说明搜索</Search>
          <Share><Person />共享</Share>
        </TabRow>
      </TopBar>

      <Ribbon>
        <Group $w={149}>
          <Tools $pad={12} $gap={5}>
            <Tool $w={60}>
              <ToolIcon><ChartBars plus /></ToolIcon>
              添加图表<br />元素<Caret />
            </Tool>
            <Tool $w={60}>
              <ToolIcon><QuickLayout /></ToolIcon>
              快速布局<br /><Caret />
            </Tool>
          </Tools>
          <GroupLabel>图表布局</GroupLabel>
        </Group>
        <Group $w={978}>
          <Tools $pad={11}>
            <Tool $w={50}>
              <ToolIcon><ColorDots /></ToolIcon>
              更改<br />颜色<Caret />
            </Tool>
            <Gallery>
              {thumbs.map((t, i) => (
                <ThumbCell key={i} $selected={i === 0}>
                  <ThumbBox $bg={t.bg}><MiniPyramid t={t} /></ThumbBox>
                </ThumbCell>
              ))}
              <GalleryScroll>
                <GalleryButton $off><Tri $up $small $color="#ccc" /></GalleryButton>
                <GalleryButton><Tri $small /></GalleryButton>
                <GalleryButton><MoreLine /><Tri $small /></GalleryButton>
              </GalleryScroll>
            </Gallery>
          </Tools>
          <GroupLabel>图表样式</GroupLabel>
        </Group>
        <Group $w={156}>
          <Tools $pad={13} $gap={4}>
            <Tool $w={64}>
              <ToolIcon><SwitchIcon /></ToolIcon>
              切换行/列
            </Tool>
            <Tool $w={64}>
              <ToolIcon><SelectData /></ToolIcon>
              选择数据
            </Tool>
          </Tools>
          <GroupLabel>数据</GroupLabel>
        </Group>
        <Group $w={85}>
          <Tools $center>
            <Tool $w={64}>
              <ToolIcon><ChartBars /></ToolIcon>
              更改<br />图表类型
            </Tool>
          </Tools>
          <GroupLabel>类型</GroupLabel>
        </Group>
        <Group $w={86}>
          <Tools $center>
            <Tool $w={64}>
              <ToolIcon><MoveChart /></ToolIcon>
              移动图表
            </Tool>
          </Tools>
          <GroupLabel>位置</GroupLabel>
        </Group>
        <Collapse>
          <svg width="14" height="8" viewBox="0 0 14 8" fill="none" stroke="#555"><path d="M1 7l6-6 6 6" /></svg>
        </Collapse>
      </Ribbon>

      <FormulaBar>
        <NameBox>图...<NameCaret /></NameBox>
        <Grip><i /><i /><i /></Grip>
        <FxBox>
          <Cross size={16} color="#b0b0b0" width={2} />
          <svg width="18" height="16" viewBox="0 0 18 16" fill="none" stroke="#b0b0b0" strokeWidth="2.500"><path d="M1 9l5 5L17 1" /></svg>
          <FxText>fx</FxText>
        </FxBox>
        <FormulaBox>
          =SERIES(<Cjk>人口金字塔演示</Cjk>!$C$1,<Cjk>人口金字塔演示</Cjk>!$A$2:$A$22,<Cjk>人口金字塔演示</Cjk>!$C$2:$C$22,2)
          <FormulaCaret />
        </FormulaBox>
      </FormulaBar>

      <Work>
        <SheetColumn>
          <SheetRow>
            <Sheet>
              <HeadRow>
                <Corner />
                {columns.map(([c, w]) => <ColHead key={c} $w={w}>{c}</ColHead>)}
              </HeadRow>
              <Row>
                <RowHead>1</RowHead>
                {headerCells.map((text, i) => (
                  <Cell key={text} $w={columns[i][1]} $cjk $range={i === 2 ? 'red' : null}>
                    {text}
                    {i === 2 && <><Knob $side="left" $range="red" /><Knob $side="right" $range="red" /></>}
                  </Cell>
                ))}
                <Cell $w={183} />
              </Row>
              {sheetRows.map(([age, m, f], i) => (
                <Row key={age}>
                  <RowHead $on={i >= 2 && i <= 6}>{i + 2}</RowHead>
                  <Cell $w={183} $range="purple" $top={i === 0}>
                    {age}
                    {i === 0 && <><Knob $side="left" $range="purple" /><Knob $side="right" $range="purple" /></>}
                  </Cell>
                  <Cell $w={185} $num>{m.toFixed(2)}</Cell>
                  <Cell $w={184} $num $range="blue" $top={i === 0}>
                    {f.toFixed(2)}
                    {i === 0 && <><Knob $side="left" $range="blue" /><Knob $side="right" $range="blue" /></>}
                  </Cell>
                  <Cell $w={183} />
                </Row>
              ))}
              <PyramidChart />
              <ChartEdge />
            </Sheet>
            <VScroll>
              <ScrollArrow><Tri $up /></ScrollArrow>
              <ScrollThumb $h={434} />
              <Spacer />
              <ScrollArrow><Tri /></ScrollArrow>
            </VScroll>
          </SheetRow>
          <TabStrip>
            <StripNav><SideTri $left /><SideTri /></StripNav>
            <SheetTab $w={75}>源数据</SheetTab>
            <SheetTab $w={161}>源数据构成比计算</SheetTab>
            <SheetTab $w={109}>人口金字塔</SheetTab>
            <SheetTab $w={142} $active>人口金字塔演示</SheetTab>
            <AddSheet>+</AddSheet>
            <HScrollWrap>
              <HGrip><i /><i /><i /></HGrip>
              <HArrow><SideTri $left /></HArrow>
              <HThumb />
              <Spacer />
              <HArrow><SideTri /></HArrow>
            </HScrollWrap>
          </TabStrip>
        </SheetColumn>

        <Pane>
          <PaneHead>
            <PaneTitle>设置数据系列格式</PaneTitle>
            <Tri $color="#777" />
            <PaneClose><Cross size={14} color="#555" width={1.800} /></PaneClose>
          </PaneHead>
          <OptionRow>系列选项<Tri $color="#777" /></OptionRow>
          <IconRow>
            <PaneIcon $on $gap={10}><FillBucket /></PaneIcon>
            <PaneIcon $gap={11}><Pentagon /></PaneIcon>
            <PaneIcon><BarsIcon /></PaneIcon>
          </IconRow>
          <Divider />
          <PaneBody>
            <PaneContent>
              <SectionHead>填充</SectionHead>
              <OptionList>
                {fillOptions.map(([text, k, on]) => (
                  <Option key={text}><Radio $on={on} /><Label text={text} keyChar={k} /></Option>
                ))}
                <Option><Check /><Label text="以互补色代表负值" keyChar="I" /></Option>
              </OptionList>
              <Field $gap={17}>
                <Label text="颜色" keyChar="C" />
                <ColorButton $hot><FillBucket small /><Tri $color="#333" /></ColorButton>
              </Field>
              <Field $gap={8}>
                <Label text="透明度" keyChar="T" />
                <Slider />
                <NumberBox>0%<Spin><TinyTri $up /><TinyTri /></Spin></NumberBox>
              </Field>
              <SectionHead $gap={19}>边框</SectionHead>
              <OptionList>
                {lineOptions.map(([text, k, on]) => (
                  <Option key={text}><Radio $on={on} /><Label text={text} keyChar={k} /></Option>
                ))}
              </OptionList>
              <Field $gap={15}>
                <Label text="颜色" keyChar="C" />
                <ColorButton><PenIcon /><Tri $color="#888" /></ColorButton>
              </Field>
              <Field $gap={8}>
                <span />
                <NumberBox />
              </Field>
            </PaneContent>
            <PaneScroll>
              <ScrollArrow><Tri $up /></ScrollArrow>
              <ScrollThumb $h={307} />
              <Spacer />
              <ScrollArrow><Tri /></ScrollArrow>
            </PaneScroll>
          </PaneBody>
          <GreenGauge />
          <Cursor width="16" height="24" viewBox="0 0 16 24">
            <path d="M1 1v18l5-4 3 7 3-1-3-7h6z" fill="#fff" stroke="#000" />
          </Cursor>
        </Pane>
      </Work>

      <StatusBar>
        <Stats>
          <span>平均值: -0.056892541</span>
          <span>计数: 66</span>
          <span>求和: -2.389486741</span>
        </Stats>
        <ViewButton $on><GridIcon /></ViewButton>
        <ViewButton><PageIcon /></ViewButton>
        <ViewButton><BreakIcon /></ViewButton>
        <Zoom>
          <ZoomSign>-</ZoomSign>
          <ZoomTrack />
          <ZoomSign>+</ZoomSign>
          <ZoomValue>100%</ZoomValue>
        </Zoom>
      </StatusBar>

      <TaskBar>
        <StartSlot><WinIcon /></StartSlot>
        {['computer', 'paint', 'note', 'lucky', 'calc', 'cam', 'sigma', 'ring', 'music', 'edge', 'word', 'ppt'].map(k => (
          <AppSlot key={k}><AppIcon kind={k} /></AppSlot>
        ))}
        <TaskItem $w={200} $active $inner={2} $track={0.15}><AppIcon kind="excel" />16-1 - Excel</TaskItem>
        <AppSlot $w={45}><AppIcon kind="chat" /></AppSlot>
        <TaskItem $w={190} $gap={7} $pad={2}><AppIcon kind="rec" />屏幕录像</TaskItem>
        <TaskItem $w={190} $gap={10} $pad={2} $track={0.9}><AppIcon kind="rec" />Recording......</TaskItem>
        <Battery>80%</Battery>
        <TraySlot $gap={13}><svg width="16" height="10" viewBox="0 0 16 10" fill="none" stroke="#000" strokeWidth="1.300"><path d="M1 9l7-8 7 8" /></svg></TraySlot>
        <TraySlot $gap={6}><PowerIcon /></TraySlot>
        <TraySlot $gap={8}><WifiIcon /></TraySlot>
        <TraySlot $gap={1}><VolumeIcon /></TraySlot>
        <TraySlot $gap={7} $bold>英</TraySlot>
        <TraySlot $gap={12}>
          <svg width="22" height="26" viewBox="0 0 22 26"><ellipse cx="11" cy="13" rx="10" ry="12" fill="#fff" stroke="#1a78c8" strokeWidth="1.500" /><text x="11" y="16" fontSize="7" fontWeight="700" fill="#1a78c8" textAnchor="middle">iFLY</text></svg>
        </TraySlot>
        <TraySlot $gap={21} $w={40}>20:25</TraySlot>
        <TraySlot $gap={21}><NoteIcon /></TraySlot>
      </TaskBar>
    </Page>
  );
}
